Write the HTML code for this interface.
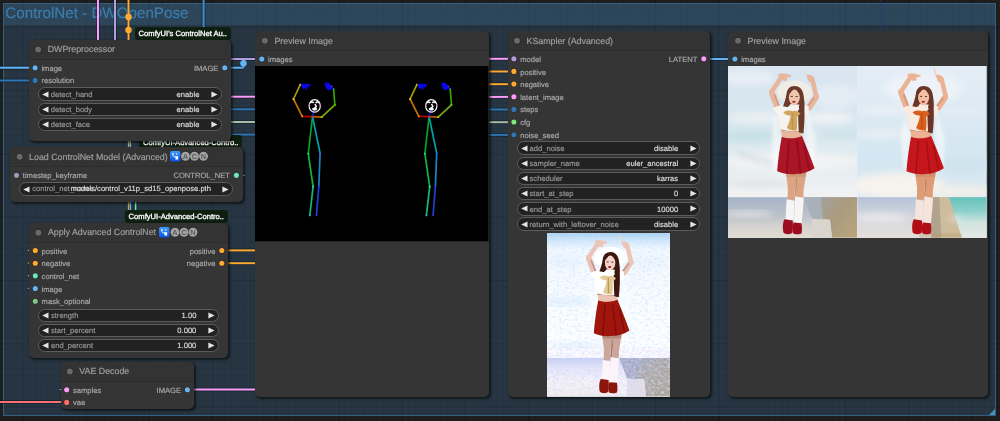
<!DOCTYPE html>
<html lang="en"><head><meta charset="utf-8"><title>ControlNet - DWOpenPose</title>
<style>
html,body{margin:0;padding:0;}
body{width:1000px;height:421px;overflow:hidden;position:relative;background:#1f1f1f;font-family:"Liberation Sans", sans-serif;}
#root{position:absolute;left:0;top:0;width:1000px;height:421px;overflow:hidden;will-change:transform;}
#bg{position:absolute;left:0;top:0;width:1000px;height:421px;
 background-image:
  linear-gradient(to right, rgba(0,0,0,0.22) 1px, transparent 1px),
  linear-gradient(to bottom, rgba(0,0,0,0.22) 1px, transparent 1px),
  linear-gradient(to right, rgba(0,0,0,0.12) 1px, transparent 1px),
  linear-gradient(to bottom, rgba(0,0,0,0.12) 1px, transparent 1px);
 background-size:63.3px 63.3px,63.3px 63.3px,6.33px 6.33px,6.33px 6.33px;
 background-position:22.2px 26.9px,22.2px 26.9px,22.2px 26.9px,22.2px 26.9px;}
#group{position:absolute;left:2.8px;top:2.8px;width:993.2px;height:413.4px;box-sizing:border-box;border:1px solid rgba(63,125,170,0.62);background:rgba(60,118,165,0.26);}
#gtitle{position:absolute;left:0;top:0;right:0;height:21.3px;background:rgba(63,120,158,0.25);}
#gcorner{position:absolute;right:0;bottom:0;width:0;height:0;border-left:6.3px solid transparent;border-bottom:6.3px solid #4a8fc0;}
.t{position:absolute;white-space:nowrap;margin:0;padding:0;text-rendering:geometricPrecision;-webkit-text-stroke:0.16px currentColor;}
.d{position:absolute;border-radius:50%;}
.node{position:absolute;background:#353535;border-radius:5px;box-shadow:1.3px 1.3px 2.2px rgba(0,0,0,0.55);overflow:hidden;}
.nt{position:absolute;left:0;top:0;right:0;background:#333333;border-bottom:1px solid rgba(0,0,0,0.13);box-sizing:border-box;}
.pill{position:absolute;box-sizing:border-box;border:1.2px solid #5c5c5c;border-radius:7px;background:#222222;}
.ar{position:absolute;overflow:visible;}
.badge{position:absolute;background:#0f1f0f;border-radius:3.2px;}
svg.layer{position:absolute;left:0;top:0;}
.img{position:absolute;overflow:hidden;}
</style></head><body>
<div id="root">
<div id="bg"></div>
<div id="group"><div id="gtitle"></div><div id="gcorner"></div></div>

<div class="t" style="left:5.3px;top:4px;font-size:15.19px;line-height:20px;color:#3c7dad;">ControlNet - DWOpenPose</div>
<svg class="layer" width="1000" height="421" viewBox="0 0 1000 421"><path d="M98 0L98 41" stroke="rgba(6,20,40,0.4)" stroke-width="3.8" fill="none"/><path d="M98 0L98 41" stroke="#ff9cf9" stroke-width="2" fill="none"/><path d="M115 0L115 41" stroke="rgba(6,20,40,0.4)" stroke-width="3.8" fill="none"/><path d="M115 0L115 41" stroke="#b39ddb" stroke-width="2" fill="none"/><path d="M128.5 0L128.5 41" stroke="rgba(6,20,40,0.4)" stroke-width="3.8" fill="none"/><path d="M128.5 0L128.5 41" stroke="#ffa931" stroke-width="2" fill="none"/><circle cx="128.5" cy="17" r="3.2" fill="#ffa931"/><circle cx="128.5" cy="30" r="3.2" fill="#ffa931"/><path d="M203.6 0L203.6 28" stroke="rgba(6,20,40,0.4)" stroke-width="3.8" fill="none"/><path d="M203.6 0L203.6 28" stroke="#3a8fd0" stroke-width="2" fill="none"/><path d="M880.6 0L880.6 32" stroke="#2a3a88" stroke-width="1" opacity="0.45" fill="none"/><path d="M0 67.7L31 67.7" stroke="rgba(6,20,40,0.4)" stroke-width="3.8" fill="none"/><path d="M0 67.7L31 67.7" stroke="#64b5f6" stroke-width="2" fill="none"/><path d="M0 80.5L31 80.5" stroke="rgba(6,20,40,0.4)" stroke-width="3.8" fill="none"/><path d="M0 80.5L31 80.5" stroke="#3074b2" stroke-width="2" fill="none"/><path d="M0 402L62 402" stroke="rgba(6,20,40,0.4)" stroke-width="3.8" fill="none"/><path d="M0 402L62 402" stroke="#ff6e6e" stroke-width="2" fill="none"/><path d="M59.6 389.6L62 389.6" stroke="rgba(6,20,40,0.4)" stroke-width="2.8" fill="none"/><path d="M59.6 389.6L62 389.6" stroke="#ff9cf9" stroke-width="1" fill="none"/><path d="M230 59L256 59" stroke="rgba(6,20,40,0.4)" stroke-width="3.8" fill="none"/><path d="M230 59L256 59" stroke="#b39ddb" stroke-width="2" fill="none"/><path d="M228 67.7L243.5 67.7" stroke="rgba(6,20,40,0.4)" stroke-width="3.8" fill="none"/><path d="M228 67.7L243.5 67.7" stroke="#64b5f6" stroke-width="2" fill="none"/><path d="M243.5 67.7L243.5 60" stroke="rgba(6,20,40,0.4)" stroke-width="3.8" fill="none"/><path d="M243.5 67.7L243.5 60" stroke="#64b5f6" stroke-width="2" fill="none"/><circle cx="243.5" cy="63.3" r="3.2" fill="#64b5f6"/><path d="M230 96.7L256 96.7" stroke="rgba(6,20,40,0.4)" stroke-width="3.8" fill="none"/><path d="M230 96.7L256 96.7" stroke="#ff9cf9" stroke-width="2" fill="none"/><path d="M230 109.3L256 109.3" stroke="rgba(6,20,40,0.4)" stroke-width="3.8" fill="none"/><path d="M230 109.3L256 109.3" stroke="#3074b2" stroke-width="2" fill="none"/><path d="M230 122L256 122" stroke="rgba(6,20,40,0.4)" stroke-width="3.8" fill="none"/><path d="M230 122L256 122" stroke="#a9bca4" stroke-width="2" fill="none"/><path d="M230 134.6L256 134.6" stroke="rgba(6,20,40,0.4)" stroke-width="3.8" fill="none"/><path d="M230 134.6L256 134.6" stroke="#3074b2" stroke-width="2" fill="none"/><path d="M128.6 139L128.6 149" stroke="rgba(6,20,40,0.4)" stroke-width="3.4" fill="none"/><path d="M128.6 139L128.6 149" stroke="#ffa931" stroke-width="1.6" fill="none"/><path d="M130.4 139L130.4 149" stroke="rgba(6,20,40,0.4)" stroke-width="3.4" fill="none"/><path d="M130.4 139L130.4 149" stroke="#64b5f6" stroke-width="1.6" fill="none"/><path d="M128.6 201L128.6 212" stroke="rgba(6,20,40,0.4)" stroke-width="3.4" fill="none"/><path d="M128.6 201L128.6 212" stroke="#ffa931" stroke-width="1.6" fill="none"/><path d="M130.4 201L130.4 212" stroke="rgba(6,20,40,0.4)" stroke-width="3.4" fill="none"/><path d="M130.4 201L130.4 212" stroke="#64b5f6" stroke-width="1.6" fill="none"/><path d="M135.6 201L135.6 212" stroke="rgba(6,20,40,0.4)" stroke-width="3.4" fill="none"/><path d="M135.6 201L135.6 212" stroke="#6ee7b7" stroke-width="1.6" fill="none"/><path d="M226 250.4L256 250.4" stroke="rgba(6,20,40,0.4)" stroke-width="3.8" fill="none"/><path d="M226 250.4L256 250.4" stroke="#ffa931" stroke-width="2" fill="none"/><path d="M226 263.2L256 263.2" stroke="rgba(6,20,40,0.4)" stroke-width="3.8" fill="none"/><path d="M226 263.2L256 263.2" stroke="#ffa931" stroke-width="2" fill="none"/><path d="M27.8 250.4L30 250.4" stroke="rgba(6,20,40,0.4)" stroke-width="3" fill="none"/><path d="M27.8 250.4L30 250.4" stroke="#ffa931" stroke-width="1.2" fill="none"/><path d="M27.8 263.1L30 263.1" stroke="rgba(6,20,40,0.4)" stroke-width="3" fill="none"/><path d="M27.8 263.1L30 263.1" stroke="#ffa931" stroke-width="1.2" fill="none"/><path d="M27.8 275.7L30 275.7" stroke="rgba(6,20,40,0.4)" stroke-width="3" fill="none"/><path d="M27.8 275.7L30 275.7" stroke="#6ee7b7" stroke-width="1.2" fill="none"/><path d="M27.8 288.4L30 288.4" stroke="rgba(6,20,40,0.4)" stroke-width="3" fill="none"/><path d="M27.8 288.4L30 288.4" stroke="#64b5f6" stroke-width="1.2" fill="none"/><path d="M237 175.3L245 175.3" stroke="rgba(6,20,40,0.4)" stroke-width="3" fill="none"/><path d="M237 175.3L245 175.3" stroke="#6ee7b7" stroke-width="1.2" fill="none"/><path d="M192 389.6L256 389.6" stroke="rgba(6,20,40,0.4)" stroke-width="3.8" fill="none"/><path d="M192 389.6L256 389.6" stroke="#ff9cf9" stroke-width="2" fill="none"/><path d="M489 58.8L509 58.8" stroke="rgba(6,20,40,0.4)" stroke-width="3.8" fill="none"/><path d="M489 58.8L509 58.8" stroke="#ff9cf9" stroke-width="2" fill="none"/><path d="M489 71.5L509 71.5" stroke="rgba(6,20,40,0.4)" stroke-width="3.8" fill="none"/><path d="M489 71.5L509 71.5" stroke="#ffa931" stroke-width="2" fill="none"/><path d="M489 84.2L509 84.2" stroke="rgba(6,20,40,0.4)" stroke-width="3.8" fill="none"/><path d="M489 84.2L509 84.2" stroke="#ffa931" stroke-width="2" fill="none"/><path d="M489 96.9L509 96.9" stroke="rgba(6,20,40,0.4)" stroke-width="3.8" fill="none"/><path d="M489 96.9L509 96.9" stroke="#ff9cf9" stroke-width="2" fill="none"/><path d="M489 109.5L509 109.5" stroke="rgba(6,20,40,0.4)" stroke-width="3.8" fill="none"/><path d="M489 109.5L509 109.5" stroke="#3074b2" stroke-width="2" fill="none"/><path d="M489 122.2L509 122.2" stroke="rgba(6,20,40,0.4)" stroke-width="3.8" fill="none"/><path d="M489 122.2L509 122.2" stroke="#a9bca4" stroke-width="2" fill="none"/><path d="M489 134.9L509 134.9" stroke="rgba(6,20,40,0.4)" stroke-width="3.8" fill="none"/><path d="M489 134.9L509 134.9" stroke="#3074b2" stroke-width="2" fill="none"/><path d="M709 59L729 59" stroke="rgba(6,20,40,0.4)" stroke-width="3.8" fill="none"/><path d="M709 59L729 59" stroke="#64b5f6" stroke-width="2" fill="none"/></svg>

<div class="badge" style="left:139.4px;top:135.2px;width:103px;height:12.6px"></div>
<div class="t" style="left:143px;top:138px;font-size:7.6px;line-height:10px;color:#ffffff;-webkit-text-stroke:0.3px #fff">ComfyUI-Advanced-Contro..</div>
<div class="node" style="left:10.4px;top:147.3px;width:232.2px;height:55.1px"><div class="nt" style="height:19.59px"></div></div>
<svg class="ar" style="left:15px;top:152px" width="9" height="9"><circle cx="4.6" cy="4.7" r="3.55" fill="rgba(0,0,0,0.28)"/><circle cx="4.6" cy="4.7" r="3" fill="#6a6a6a"/></svg>
<svg class="ar" style="left:169.9px;top:150.9px" width="10.4" height="10.6" viewBox="0 0 10.4 10.6"><defs><linearGradient id="pg1699" x1="0" y1="0" x2="0" y2="1"><stop offset="0" stop-color="#3b9dff"/><stop offset="1" stop-color="#0a4fe6"/></linearGradient></defs><rect x="0" y="0" width="10.4" height="10.6" rx="1.8" fill="url(#pg1699)"/><circle cx="3" cy="2.9" r="0.9" fill="#fff"/><path d="M2.6 4.2L4.6 6.2L6.2 5.4" stroke="#fff" stroke-width="1" fill="none"/><circle cx="6.6" cy="3" r="0.8" fill="#e8f0ff"/><path d="M5.6 5.6L8 5L8.2 8.4L5.4 8.6Z" fill="#fff"/></svg>
<svg class="ar" style="left:180px;top:150px" width="12" height="12"><circle cx="5.5" cy="6.2" r="5.05" fill="rgba(0,0,0,0.28)"/><circle cx="5.5" cy="6.2" r="4.5" fill="#a3a3a3"/></svg>
<div class="t" style="left:181px;top:151.6px;width:9px;text-align:center;font-size:7.4px;line-height:9px;font-weight:bold;color:#5e5e5e;-webkit-text-stroke:0">A</div>
<svg class="ar" style="left:189px;top:150px" width="12" height="12"><circle cx="5.5" cy="6.2" r="5.05" fill="rgba(0,0,0,0.28)"/><circle cx="5.5" cy="6.2" r="4.5" fill="#a3a3a3"/></svg>
<div class="t" style="left:190px;top:151.6px;width:9px;text-align:center;font-size:7.4px;line-height:9px;font-weight:bold;color:#5e5e5e;-webkit-text-stroke:0">C</div>
<svg class="ar" style="left:198px;top:150px" width="12" height="12"><circle cx="5.5" cy="6.2" r="5.05" fill="rgba(0,0,0,0.28)"/><circle cx="5.5" cy="6.2" r="4.5" fill="#a3a3a3"/></svg>
<div class="t" style="left:199px;top:151.6px;width:9px;text-align:center;font-size:7.4px;line-height:9px;font-weight:bold;color:#5e5e5e;-webkit-text-stroke:0">N</div>
<div class="t" style="left:29.09px;top:151px;font-size:8.86px;line-height:12px;color:#a0a0a0;">Load ControlNet Model (Advanced)</div>
<svg class="ar" style="left:12px;top:171px" width="9" height="9"><circle cx="4.5" cy="4.35" r="3.1" fill="rgba(0,0,0,0.28)"/><circle cx="4.5" cy="4.35" r="2.55" fill="#9c98b8"/></svg>
<div class="t" style="left:22.8px;top:171px;font-size:7.6px;line-height:10px;color:#aaaaaa;">timestep_keyframe</div>
<svg class="ar" style="left:232px;top:171px" width="9" height="9"><circle cx="4.4" cy="4.35" r="3.1" fill="rgba(0,0,0,0.28)"/><circle cx="4.4" cy="4.35" r="2.55" fill="#6ee7b7"/></svg>
<div class="t" style="right:770px;text-align:right;top:171px;font-size:7.6px;line-height:10px;color:#aaaaaa;">CONTROL_NET</div>
<div class="pill" style="left:19.4px;top:182.35px;width:213.8px;height:13.36px"></div>
<svg class="ar" style="left:23.3px;top:185.53px" width="7" height="7" viewBox="0 0 7 7"><path d="M6.5 0.4L0.2 3.5L6.5 6.6Z" fill="#e4e4e4"/></svg>
<svg class="ar" style="left:222.4px;top:185.53px" width="7" height="7" viewBox="0 0 7 7"><path d="M0.4 0.4L6.6 3.5L0.4 6.6Z" fill="#e4e4e4"/></svg>
<div class="t" style="left:32.16px;top:184px;font-size:7.6px;line-height:10px;color:#999999;">control_net_name</div>
<div class="t" style="right:789.05px;text-align:right;top:184px;font-size:7.6px;line-height:10px;color:#dddddd;">models/control_v11p_sd15_openpose.pth</div>
<div class="badge" style="left:135px;top:27.2px;width:96px;height:12.6px"></div>
<div class="t" style="left:138.6px;top:29px;font-size:7.6px;line-height:10px;color:#ffffff;-webkit-text-stroke:0.3px #fff">ComfyUI's ControlNet Au..</div>
<div class="node" style="left:29px;top:40px;width:202px;height:100.6px"><div class="nt" style="height:19.59px"></div></div>
<svg class="ar" style="left:34px;top:45px" width="9" height="9"><circle cx="4.2" cy="4.4" r="3.55" fill="rgba(0,0,0,0.28)"/><circle cx="4.2" cy="4.4" r="3" fill="#6a6a6a"/></svg>
<div class="t" style="left:47.69px;top:43px;font-size:8.86px;line-height:12px;color:#a0a0a0;">DWPreprocessor</div>
<svg class="ar" style="left:31px;top:64px" width="9" height="9"><circle cx="4.1" cy="3.75" r="3.1" fill="rgba(0,0,0,0.28)"/><circle cx="4.1" cy="3.75" r="2.55" fill="#64b5f6"/></svg>
<div class="t" style="left:41.4px;top:64px;font-size:7.6px;line-height:10px;color:#aaaaaa;">image</div>
<svg class="ar" style="left:31px;top:76px" width="9" height="9"><circle cx="4.1" cy="4.41" r="3.1" fill="rgba(0,0,0,0.28)"/><circle cx="4.1" cy="4.41" r="2.55" fill="#3074b2"/></svg>
<div class="t" style="left:41.4px;top:76px;font-size:7.6px;line-height:10px;color:#aaaaaa;">resolution</div>
<svg class="ar" style="left:221px;top:64px" width="9" height="9"><circle cx="3.8" cy="3.75" r="3.1" fill="rgba(0,0,0,0.28)"/><circle cx="3.8" cy="3.75" r="2.55" fill="#64b5f6"/></svg>
<div class="t" style="right:781.6px;text-align:right;top:64px;font-size:7.6px;line-height:10px;color:#aaaaaa;">IMAGE</div>
<div class="pill" style="left:38px;top:87.36px;width:183.6px;height:13.36px"></div>
<svg class="ar" style="left:41.9px;top:90.54px" width="7" height="7" viewBox="0 0 7 7"><path d="M6.5 0.4L0.2 3.5L6.5 6.6Z" fill="#e4e4e4"/></svg>
<svg class="ar" style="left:210.8px;top:90.54px" width="7" height="7" viewBox="0 0 7 7"><path d="M0.4 0.4L6.6 3.5L0.4 6.6Z" fill="#e4e4e4"/></svg>
<div class="t" style="left:50.76px;top:90px;font-size:7.6px;line-height:10px;color:#999999;">detect_hand</div>
<div class="t" style="right:800.65px;text-align:right;top:90px;font-size:7.6px;line-height:10px;color:#dddddd;">enable</div>
<div class="pill" style="left:38px;top:102.55px;width:183.6px;height:13.36px"></div>
<svg class="ar" style="left:41.9px;top:105.73px" width="7" height="7" viewBox="0 0 7 7"><path d="M6.5 0.4L0.2 3.5L6.5 6.6Z" fill="#e4e4e4"/></svg>
<svg class="ar" style="left:210.8px;top:105.73px" width="7" height="7" viewBox="0 0 7 7"><path d="M0.4 0.4L6.6 3.5L0.4 6.6Z" fill="#e4e4e4"/></svg>
<div class="t" style="left:50.76px;top:105px;font-size:7.6px;line-height:10px;color:#999999;">detect_body</div>
<div class="t" style="right:800.65px;text-align:right;top:105px;font-size:7.6px;line-height:10px;color:#dddddd;">enable</div>
<div class="pill" style="left:38px;top:117.74px;width:183.6px;height:13.36px"></div>
<svg class="ar" style="left:41.9px;top:120.92px" width="7" height="7" viewBox="0 0 7 7"><path d="M6.5 0.4L0.2 3.5L6.5 6.6Z" fill="#e4e4e4"/></svg>
<svg class="ar" style="left:210.8px;top:120.92px" width="7" height="7" viewBox="0 0 7 7"><path d="M0.4 0.4L6.6 3.5L0.4 6.6Z" fill="#e4e4e4"/></svg>
<div class="t" style="left:50.76px;top:120px;font-size:7.6px;line-height:10px;color:#999999;">detect_face</div>
<div class="t" style="right:800.65px;text-align:right;top:120px;font-size:7.6px;line-height:10px;color:#dddddd;">enable</div>
<div class="badge" style="left:125px;top:210px;width:102.6px;height:12.6px"></div>
<div class="t" style="left:128.6px;top:212px;font-size:7.6px;line-height:10px;color:#ffffff;-webkit-text-stroke:0.3px #fff">ComfyUI-Advanced-Contro..</div>
<div class="node" style="left:29.2px;top:223.3px;width:198.8px;height:135.1px"><div class="nt" style="height:19.59px"></div></div>
<svg class="ar" style="left:34px;top:228px" width="9" height="9"><circle cx="4.4" cy="4.7" r="3.55" fill="rgba(0,0,0,0.28)"/><circle cx="4.4" cy="4.7" r="3" fill="#6a6a6a"/></svg>
<svg class="ar" style="left:159.4px;top:226.9px" width="10.4" height="10.6" viewBox="0 0 10.4 10.6"><defs><linearGradient id="pg1593" x1="0" y1="0" x2="0" y2="1"><stop offset="0" stop-color="#3b9dff"/><stop offset="1" stop-color="#0a4fe6"/></linearGradient></defs><rect x="0" y="0" width="10.4" height="10.6" rx="1.8" fill="url(#pg1593)"/><circle cx="3" cy="2.9" r="0.9" fill="#fff"/><path d="M2.6 4.2L4.6 6.2L6.2 5.4" stroke="#fff" stroke-width="1" fill="none"/><circle cx="6.6" cy="3" r="0.8" fill="#e8f0ff"/><path d="M5.6 5.6L8 5L8.2 8.4L5.4 8.6Z" fill="#fff"/></svg>
<svg class="ar" style="left:169px;top:226px" width="12" height="12"><circle cx="6" cy="6.2" r="5.05" fill="rgba(0,0,0,0.28)"/><circle cx="6" cy="6.2" r="4.5" fill="#a3a3a3"/></svg>
<div class="t" style="left:170.5px;top:227.6px;width:9px;text-align:center;font-size:7.4px;line-height:9px;font-weight:bold;color:#5e5e5e;-webkit-text-stroke:0">A</div>
<svg class="ar" style="left:178px;top:226px" width="12" height="12"><circle cx="6" cy="6.2" r="5.05" fill="rgba(0,0,0,0.28)"/><circle cx="6" cy="6.2" r="4.5" fill="#a3a3a3"/></svg>
<div class="t" style="left:179.5px;top:227.6px;width:9px;text-align:center;font-size:7.4px;line-height:9px;font-weight:bold;color:#5e5e5e;-webkit-text-stroke:0">C</div>
<svg class="ar" style="left:187px;top:226px" width="12" height="12"><circle cx="6" cy="6.2" r="5.05" fill="rgba(0,0,0,0.28)"/><circle cx="6" cy="6.2" r="4.5" fill="#a3a3a3"/></svg>
<div class="t" style="left:188.5px;top:227.6px;width:9px;text-align:center;font-size:7.4px;line-height:9px;font-weight:bold;color:#5e5e5e;-webkit-text-stroke:0">N</div>
<div class="t" style="left:47.89px;top:226px;font-size:8.86px;line-height:12px;color:#a0a0a0;">Apply Advanced ControlNet</div>
<svg class="ar" style="left:31px;top:247px" width="9" height="9"><circle cx="4.3" cy="3.55" r="3.1" fill="rgba(0,0,0,0.28)"/><circle cx="4.3" cy="3.55" r="2.55" fill="#ffa931"/></svg>
<div class="t" style="left:41.6px;top:247px;font-size:7.6px;line-height:10px;color:#aaaaaa;">positive</div>
<svg class="ar" style="left:31px;top:259px" width="9" height="9"><circle cx="4.3" cy="4.21" r="3.1" fill="rgba(0,0,0,0.28)"/><circle cx="4.3" cy="4.21" r="2.55" fill="#ffa931"/></svg>
<div class="t" style="left:41.6px;top:259px;font-size:7.6px;line-height:10px;color:#aaaaaa;">negative</div>
<svg class="ar" style="left:31px;top:272px" width="9" height="9"><circle cx="4.3" cy="3.87" r="3.1" fill="rgba(0,0,0,0.28)"/><circle cx="4.3" cy="3.87" r="2.55" fill="#6ee7b7"/></svg>
<div class="t" style="left:41.6px;top:272px;font-size:7.6px;line-height:10px;color:#aaaaaa;">control_net</div>
<svg class="ar" style="left:31px;top:284px" width="9" height="9"><circle cx="4.3" cy="4.53" r="3.1" fill="rgba(0,0,0,0.28)"/><circle cx="4.3" cy="4.53" r="2.55" fill="#64b5f6"/></svg>
<div class="t" style="left:41.6px;top:285px;font-size:7.6px;line-height:10px;color:#aaaaaa;">image</div>
<svg class="ar" style="left:31px;top:297px" width="9" height="9"><circle cx="4.3" cy="4.19" r="3.1" fill="rgba(0,0,0,0.28)"/><circle cx="4.3" cy="4.19" r="2.55" fill="#81c784"/></svg>
<div class="t" style="left:41.6px;top:297px;font-size:7.6px;line-height:10px;color:#aaaaaa;">mask_optional</div>
<svg class="ar" style="left:218px;top:247px" width="9" height="9"><circle cx="3.8" cy="3.55" r="3.1" fill="rgba(0,0,0,0.28)"/><circle cx="3.8" cy="3.55" r="2.55" fill="#ffa931"/></svg>
<div class="t" style="right:784.6px;text-align:right;top:247px;font-size:7.6px;line-height:10px;color:#aaaaaa;">positive</div>
<svg class="ar" style="left:218px;top:259px" width="9" height="9"><circle cx="3.8" cy="4.21" r="3.1" fill="rgba(0,0,0,0.28)"/><circle cx="3.8" cy="4.21" r="2.55" fill="#ffa931"/></svg>
<div class="t" style="right:784.6px;text-align:right;top:259px;font-size:7.6px;line-height:10px;color:#aaaaaa;">negative</div>
<div class="pill" style="left:38.2px;top:308.64px;width:180.4px;height:13.36px"></div>
<svg class="ar" style="left:42.1px;top:311.82px" width="7" height="7" viewBox="0 0 7 7"><path d="M6.5 0.4L0.2 3.5L6.5 6.6Z" fill="#e4e4e4"/></svg>
<svg class="ar" style="left:207.8px;top:311.82px" width="7" height="7" viewBox="0 0 7 7"><path d="M0.4 0.4L6.6 3.5L0.4 6.6Z" fill="#e4e4e4"/></svg>
<div class="t" style="left:50.96px;top:311px;font-size:7.6px;line-height:10px;color:#999999;">strength</div>
<div class="t" style="right:803.65px;text-align:right;top:311px;font-size:7.6px;line-height:10px;color:#dddddd;">1.00</div>
<div class="pill" style="left:38.2px;top:323.83px;width:180.4px;height:13.36px"></div>
<svg class="ar" style="left:42.1px;top:327.01px" width="7" height="7" viewBox="0 0 7 7"><path d="M6.5 0.4L0.2 3.5L6.5 6.6Z" fill="#e4e4e4"/></svg>
<svg class="ar" style="left:207.8px;top:327.01px" width="7" height="7" viewBox="0 0 7 7"><path d="M0.4 0.4L6.6 3.5L0.4 6.6Z" fill="#e4e4e4"/></svg>
<div class="t" style="left:50.96px;top:326px;font-size:7.6px;line-height:10px;color:#999999;">start_percent</div>
<div class="t" style="right:803.65px;text-align:right;top:326px;font-size:7.6px;line-height:10px;color:#dddddd;">0.000</div>
<div class="pill" style="left:38.2px;top:339.02px;width:180.4px;height:13.36px"></div>
<svg class="ar" style="left:42.1px;top:342.2px" width="7" height="7" viewBox="0 0 7 7"><path d="M6.5 0.4L0.2 3.5L6.5 6.6Z" fill="#e4e4e4"/></svg>
<svg class="ar" style="left:207.8px;top:342.2px" width="7" height="7" viewBox="0 0 7 7"><path d="M0.4 0.4L6.6 3.5L0.4 6.6Z" fill="#e4e4e4"/></svg>
<div class="t" style="left:50.96px;top:341px;font-size:7.6px;line-height:10px;color:#999999;">end_percent</div>
<div class="t" style="right:803.65px;text-align:right;top:341px;font-size:7.6px;line-height:10px;color:#dddddd;">1.000</div>
<div class="node" style="left:60.6px;top:362px;width:133px;height:47px"><div class="nt" style="height:19.59px"></div></div>
<svg class="ar" style="left:65px;top:367px" width="9" height="9"><circle cx="4.8" cy="4.39" r="3.55" fill="rgba(0,0,0,0.28)"/><circle cx="4.8" cy="4.39" r="3" fill="#6a6a6a"/></svg>
<div class="t" style="left:79.29px;top:365px;font-size:8.86px;line-height:12px;color:#a0a0a0;">VAE Decode</div>
<svg class="ar" style="left:63px;top:386px" width="9" height="9"><circle cx="3.7" cy="3.75" r="3.1" fill="rgba(0,0,0,0.28)"/><circle cx="3.7" cy="3.75" r="2.55" fill="#ff9cf9"/></svg>
<div class="t" style="left:73px;top:386px;font-size:7.6px;line-height:10px;color:#aaaaaa;">samples</div>
<svg class="ar" style="left:63px;top:398px" width="9" height="9"><circle cx="3.7" cy="4.41" r="3.1" fill="rgba(0,0,0,0.28)"/><circle cx="3.7" cy="4.41" r="2.55" fill="#ff6e6e"/></svg>
<div class="t" style="left:73px;top:398px;font-size:7.6px;line-height:10px;color:#aaaaaa;">vae</div>
<svg class="ar" style="left:183px;top:386px" width="9" height="9"><circle cx="4.4" cy="3.75" r="3.1" fill="rgba(0,0,0,0.28)"/><circle cx="4.4" cy="3.75" r="2.55" fill="#64b5f6"/></svg>
<div class="t" style="right:819px;text-align:right;top:386px;font-size:7.6px;line-height:10px;color:#aaaaaa;">IMAGE</div>
<div class="node" style="left:255.2px;top:31.25px;width:234.3px;height:365.8px"><div class="nt" style="height:19.59px"></div></div>
<svg class="ar" style="left:260px;top:36px" width="9" height="9"><circle cx="4.9" cy="4.65" r="3.55" fill="rgba(0,0,0,0.28)"/><circle cx="4.9" cy="4.65" r="3" fill="#6a6a6a"/></svg>
<div class="t" style="left:274.39px;top:35px;font-size:8.86px;line-height:12px;color:#a0a0a0;">Preview Image</div>
<svg class="ar" style="left:258px;top:55px" width="9" height="9"><circle cx="3.8" cy="4" r="3.1" fill="rgba(0,0,0,0.28)"/><circle cx="3.8" cy="4" r="2.55" fill="#64b5f6"/></svg>
<div class="t" style="left:268.1px;top:55px;font-size:7.6px;line-height:10px;color:#aaaaaa;">images</div>
<div class="node" style="left:508px;top:31.25px;width:202px;height:365.8px"><div class="nt" style="height:19.59px"></div></div>
<svg class="ar" style="left:513px;top:36px" width="9" height="9"><circle cx="4" cy="4.65" r="3.55" fill="rgba(0,0,0,0.28)"/><circle cx="4" cy="4.65" r="3" fill="#6a6a6a"/></svg>
<div class="t" style="left:526.49px;top:35px;font-size:8.86px;line-height:12px;color:#a0a0a0;">KSampler (Advanced)</div>
<svg class="ar" style="left:510px;top:55px" width="9" height="9"><circle cx="3.9" cy="3.75" r="3.1" fill="rgba(0,0,0,0.28)"/><circle cx="3.9" cy="3.75" r="2.55" fill="#b39ddb"/></svg>
<div class="t" style="left:520.2px;top:55px;font-size:7.6px;line-height:10px;color:#aaaaaa;">model</div>
<svg class="ar" style="left:510px;top:67px" width="9" height="9"><circle cx="3.9" cy="4.41" r="3.1" fill="rgba(0,0,0,0.28)"/><circle cx="3.9" cy="4.41" r="2.55" fill="#ffa931"/></svg>
<div class="t" style="left:520.2px;top:68px;font-size:7.6px;line-height:10px;color:#aaaaaa;">positive</div>
<svg class="ar" style="left:510px;top:80px" width="9" height="9"><circle cx="3.9" cy="4.07" r="3.1" fill="rgba(0,0,0,0.28)"/><circle cx="3.9" cy="4.07" r="2.55" fill="#ffa931"/></svg>
<div class="t" style="left:520.2px;top:80px;font-size:7.6px;line-height:10px;color:#aaaaaa;">negative</div>
<svg class="ar" style="left:510px;top:93px" width="9" height="9"><circle cx="3.9" cy="3.73" r="3.1" fill="rgba(0,0,0,0.28)"/><circle cx="3.9" cy="3.73" r="2.55" fill="#ff9cf9"/></svg>
<div class="t" style="left:520.2px;top:93px;font-size:7.6px;line-height:10px;color:#aaaaaa;">latent_image</div>
<svg class="ar" style="left:510px;top:105px" width="9" height="9"><circle cx="3.9" cy="4.39" r="3.1" fill="rgba(0,0,0,0.28)"/><circle cx="3.9" cy="4.39" r="2.55" fill="#3074b2"/></svg>
<div class="t" style="left:520.2px;top:105px;font-size:7.6px;line-height:10px;color:#aaaaaa;">steps</div>
<svg class="ar" style="left:510px;top:118px" width="9" height="9"><circle cx="3.9" cy="4.05" r="3.1" fill="rgba(0,0,0,0.28)"/><circle cx="3.9" cy="4.05" r="2.55" fill="#7ee87e"/></svg>
<div class="t" style="left:520.2px;top:118px;font-size:7.6px;line-height:10px;color:#aaaaaa;">cfg</div>
<svg class="ar" style="left:510px;top:131px" width="9" height="9"><circle cx="3.9" cy="3.71" r="3.1" fill="rgba(0,0,0,0.28)"/><circle cx="3.9" cy="3.71" r="2.55" fill="#3074b2"/></svg>
<div class="t" style="left:520.2px;top:131px;font-size:7.6px;line-height:10px;color:#aaaaaa;">noise_seed</div>
<svg class="ar" style="left:700px;top:55px" width="9" height="9"><circle cx="3.8" cy="3.75" r="3.1" fill="rgba(0,0,0,0.28)"/><circle cx="3.8" cy="3.75" r="2.55" fill="#ff9cf9"/></svg>
<div class="t" style="right:302.6px;text-align:right;top:55px;font-size:7.6px;line-height:10px;color:#aaaaaa;">LATENT</div>
<div class="pill" style="left:516.8px;top:141.45px;width:183.6px;height:13.36px"></div>
<svg class="ar" style="left:520.7px;top:144.63px" width="7" height="7" viewBox="0 0 7 7"><path d="M6.5 0.4L0.2 3.5L6.5 6.6Z" fill="#e4e4e4"/></svg>
<svg class="ar" style="left:689.6px;top:144.63px" width="7" height="7" viewBox="0 0 7 7"><path d="M0.4 0.4L6.6 3.5L0.4 6.6Z" fill="#e4e4e4"/></svg>
<div class="t" style="left:529.56px;top:144px;font-size:7.6px;line-height:10px;color:#999999;">add_noise</div>
<div class="t" style="right:321.85px;text-align:right;top:144px;font-size:7.6px;line-height:10px;color:#dddddd;">disable</div>
<div class="pill" style="left:516.8px;top:156.64px;width:183.6px;height:13.36px"></div>
<svg class="ar" style="left:520.7px;top:159.82px" width="7" height="7" viewBox="0 0 7 7"><path d="M6.5 0.4L0.2 3.5L6.5 6.6Z" fill="#e4e4e4"/></svg>
<svg class="ar" style="left:689.6px;top:159.82px" width="7" height="7" viewBox="0 0 7 7"><path d="M0.4 0.4L6.6 3.5L0.4 6.6Z" fill="#e4e4e4"/></svg>
<div class="t" style="left:529.56px;top:159px;font-size:7.6px;line-height:10px;color:#999999;">sampler_name</div>
<div class="t" style="right:321.85px;text-align:right;top:159px;font-size:7.6px;line-height:10px;color:#dddddd;">euler_ancestral</div>
<div class="pill" style="left:516.8px;top:171.83px;width:183.6px;height:13.36px"></div>
<svg class="ar" style="left:520.7px;top:175.01px" width="7" height="7" viewBox="0 0 7 7"><path d="M6.5 0.4L0.2 3.5L6.5 6.6Z" fill="#e4e4e4"/></svg>
<svg class="ar" style="left:689.6px;top:175.01px" width="7" height="7" viewBox="0 0 7 7"><path d="M0.4 0.4L6.6 3.5L0.4 6.6Z" fill="#e4e4e4"/></svg>
<div class="t" style="left:529.56px;top:174px;font-size:7.6px;line-height:10px;color:#999999;">scheduler</div>
<div class="t" style="right:321.85px;text-align:right;top:174px;font-size:7.6px;line-height:10px;color:#dddddd;">karras</div>
<div class="pill" style="left:516.8px;top:187.03px;width:183.6px;height:13.36px"></div>
<svg class="ar" style="left:520.7px;top:190.21px" width="7" height="7" viewBox="0 0 7 7"><path d="M6.5 0.4L0.2 3.5L6.5 6.6Z" fill="#e4e4e4"/></svg>
<svg class="ar" style="left:689.6px;top:190.21px" width="7" height="7" viewBox="0 0 7 7"><path d="M0.4 0.4L6.6 3.5L0.4 6.6Z" fill="#e4e4e4"/></svg>
<div class="t" style="left:529.56px;top:189px;font-size:7.6px;line-height:10px;color:#999999;">start_at_step</div>
<div class="t" style="right:321.85px;text-align:right;top:189px;font-size:7.6px;line-height:10px;color:#dddddd;">0</div>
<div class="pill" style="left:516.8px;top:202.22px;width:183.6px;height:13.36px"></div>
<svg class="ar" style="left:520.7px;top:205.4px" width="7" height="7" viewBox="0 0 7 7"><path d="M6.5 0.4L0.2 3.5L6.5 6.6Z" fill="#e4e4e4"/></svg>
<svg class="ar" style="left:689.6px;top:205.4px" width="7" height="7" viewBox="0 0 7 7"><path d="M0.4 0.4L6.6 3.5L0.4 6.6Z" fill="#e4e4e4"/></svg>
<div class="t" style="left:529.56px;top:205px;font-size:7.6px;line-height:10px;color:#999999;">end_at_step</div>
<div class="t" style="right:321.85px;text-align:right;top:205px;font-size:7.6px;line-height:10px;color:#dddddd;">10000</div>
<div class="pill" style="left:516.8px;top:217.41px;width:183.6px;height:13.36px"></div>
<svg class="ar" style="left:520.7px;top:220.59px" width="7" height="7" viewBox="0 0 7 7"><path d="M6.5 0.4L0.2 3.5L6.5 6.6Z" fill="#e4e4e4"/></svg>
<svg class="ar" style="left:689.6px;top:220.59px" width="7" height="7" viewBox="0 0 7 7"><path d="M0.4 0.4L6.6 3.5L0.4 6.6Z" fill="#e4e4e4"/></svg>
<div class="t" style="left:529.56px;top:220px;font-size:7.6px;line-height:10px;color:#999999;">return_with_leftover_noise</div>
<div class="t" style="right:321.85px;text-align:right;top:220px;font-size:7.6px;line-height:10px;color:#dddddd;">disable</div>
<div class="node" style="left:728.4px;top:31.25px;width:259.2px;height:365.8px"><div class="nt" style="height:19.59px"></div></div>
<svg class="ar" style="left:734px;top:36px" width="9" height="9"><circle cx="4" cy="4.65" r="3.55" fill="rgba(0,0,0,0.28)"/><circle cx="4" cy="4.65" r="3" fill="#6a6a6a"/></svg>
<div class="t" style="left:747.49px;top:35px;font-size:8.86px;line-height:12px;color:#a0a0a0;">Preview Image</div>
<svg class="ar" style="left:731px;top:55px" width="9" height="9"><circle cx="3.9" cy="4" r="3.1" fill="rgba(0,0,0,0.28)"/><circle cx="3.9" cy="4" r="2.55" fill="#64b5f6"/></svg>
<div class="t" style="left:741.2px;top:55px;font-size:7.6px;line-height:10px;color:#aaaaaa;">images</div>
<svg class="img" style="left:255.2px;top:66.3px" width="233.4" height="175.3" viewBox="255.2 66.3 233.4 175.3"><rect x="255.2" y="66.3" width="233.4" height="175.3" fill="#000"/><g fill="none"><path d="M312.7 116.9L302.4 116.6" stroke="#b80000" stroke-width="1.7" stroke-linecap="round"/><path d="M312.7 116.9L321.8 117.5" stroke="#b85a00" stroke-width="1.7" stroke-linecap="round"/><path d="M302.4 116.6L293.7 99.3" stroke="#c07400" stroke-width="1.7" stroke-linecap="round"/><path d="M293.7 99.3L300.5 85" stroke="#aca000" stroke-width="1.7" stroke-linecap="round"/><path d="M321.8 117.5L335.1 105.2" stroke="#7aac00" stroke-width="1.7" stroke-linecap="round"/><path d="M335.1 105.2L333.8 89.4" stroke="#3aa200" stroke-width="1.7" stroke-linecap="round"/><path d="M312.7 116.9L308.5 154" stroke="#00a622" stroke-width="1.7" stroke-linecap="round"/><path d="M308.5 154L313.3 187" stroke="#12b83a" stroke-width="1.7" stroke-linecap="round"/><path d="M313.3 187L310 215.6" stroke="#18b878" stroke-width="1.7" stroke-linecap="round"/><path d="M312.7 116.9L320.3 153.5" stroke="#00a4ac" stroke-width="1.7" stroke-linecap="round"/><path d="M320.3 153.5L319 187" stroke="#1c84c4" stroke-width="1.7" stroke-linecap="round"/><path d="M319 187L316.7 215.6" stroke="#1c44d4" stroke-width="1.7" stroke-linecap="round"/><path d="M312.7 116.9L314.6 108.5" stroke="#1010c0" stroke-width="1.7" stroke-linecap="round"/><circle cx="300.5" cy="85" r="0.9" fill="#d8d000"/><circle cx="293.7" cy="99.3" r="0.9" fill="#ffd000"/><circle cx="302.4" cy="116.6" r="0.9" fill="#ff8a00"/><circle cx="321.8" cy="117.5" r="0.9" fill="#a8e000"/><circle cx="335.1" cy="105.2" r="0.9" fill="#40e000"/><circle cx="333.8" cy="89.4" r="0.9" fill="#20c040"/><circle cx="308.5" cy="154" r="0.9" fill="#20e080"/><circle cx="320.3" cy="153.5" r="0.9" fill="#2060ff"/><circle cx="313.3" cy="187" r="0.9" fill="#30e0c0"/><circle cx="319" cy="187" r="0.9" fill="#2030ff"/><circle cx="310" cy="215.6" r="0.9" fill="#20b0ff"/><circle cx="316.7" cy="215.6" r="0.9" fill="#6020e0"/><circle cx="312.7" cy="116.9" r="0.9" fill="#e04000"/><ellipse cx="314.9" cy="106.2" rx="5.6" ry="6.2" fill="none" stroke="#f6f6f6" stroke-width="1.2"/><path d="M310.5 103.2q1.6 -1.8 3.4 0M315.9 103.2q1.6 -1.8 3.4 0" stroke="#fff" stroke-width="1.7" fill="none"/><path d="M315.1 104.2l1.4 2.6l-2 1.6" stroke="#fff" stroke-width="1.4" fill="none"/><ellipse cx="314.9" cy="109.2" rx="2.6" ry="1.5" fill="#fff"/><circle cx="309.5" cy="104.6" r="0.8" fill="#ff40c0"/><circle cx="320.3" cy="105" r="0.8" fill="#ff40c0"/><path d="M301.4 84.4l9.6 0.6l-2.6 1.2l1 1l-3 0.2l0.4 2.2l-2.4 -1.6l-1.4 1l-0.8 -2.4z" fill="#0808f0" stroke="#0808f0" stroke-width="0.8" stroke-linejoin="round"/><path d="M325.4 83.2l3.4 0.4l3 2.6l1.6 2.6l-3 0.4l-1.4 1.4l-2.2 -1.8l-1 -2.4z" fill="#0808f0" stroke="#0808f0" stroke-width="0.8" stroke-linejoin="round"/><circle cx="332" cy="86.8" r="0.7" fill="#d020a0"/><path d="M429.3 116.9L419 116.6" stroke="#b80000" stroke-width="1.7" stroke-linecap="round"/><path d="M429.3 116.9L438.4 117.5" stroke="#b85a00" stroke-width="1.7" stroke-linecap="round"/><path d="M419 116.6L410.3 99.3" stroke="#c07400" stroke-width="1.7" stroke-linecap="round"/><path d="M410.3 99.3L417.1 85" stroke="#aca000" stroke-width="1.7" stroke-linecap="round"/><path d="M438.4 117.5L451.7 105.2" stroke="#7aac00" stroke-width="1.7" stroke-linecap="round"/><path d="M451.7 105.2L450.4 89.4" stroke="#3aa200" stroke-width="1.7" stroke-linecap="round"/><path d="M429.3 116.9L425.1 154" stroke="#00a622" stroke-width="1.7" stroke-linecap="round"/><path d="M425.1 154L429.9 187" stroke="#12b83a" stroke-width="1.7" stroke-linecap="round"/><path d="M429.9 187L426.6 215.6" stroke="#18b878" stroke-width="1.7" stroke-linecap="round"/><path d="M429.3 116.9L436.9 153.5" stroke="#00a4ac" stroke-width="1.7" stroke-linecap="round"/><path d="M436.9 153.5L435.6 187" stroke="#1c84c4" stroke-width="1.7" stroke-linecap="round"/><path d="M435.6 187L433.3 215.6" stroke="#1c44d4" stroke-width="1.7" stroke-linecap="round"/><path d="M429.3 116.9L431.2 108.5" stroke="#1010c0" stroke-width="1.7" stroke-linecap="round"/><circle cx="417.1" cy="85" r="0.9" fill="#d8d000"/><circle cx="410.3" cy="99.3" r="0.9" fill="#ffd000"/><circle cx="419" cy="116.6" r="0.9" fill="#ff8a00"/><circle cx="438.4" cy="117.5" r="0.9" fill="#a8e000"/><circle cx="451.7" cy="105.2" r="0.9" fill="#40e000"/><circle cx="450.4" cy="89.4" r="0.9" fill="#20c040"/><circle cx="425.1" cy="154" r="0.9" fill="#20e080"/><circle cx="436.9" cy="153.5" r="0.9" fill="#2060ff"/><circle cx="429.9" cy="187" r="0.9" fill="#30e0c0"/><circle cx="435.6" cy="187" r="0.9" fill="#2030ff"/><circle cx="426.6" cy="215.6" r="0.9" fill="#20b0ff"/><circle cx="433.3" cy="215.6" r="0.9" fill="#6020e0"/><circle cx="429.3" cy="116.9" r="0.9" fill="#e04000"/><ellipse cx="431.5" cy="106.2" rx="5.6" ry="6.2" fill="none" stroke="#f6f6f6" stroke-width="1.2"/><path d="M427.1 103.2q1.6 -1.8 3.4 0M432.5 103.2q1.6 -1.8 3.4 0" stroke="#fff" stroke-width="1.7" fill="none"/><path d="M431.7 104.2l1.4 2.6l-2 1.6" stroke="#fff" stroke-width="1.4" fill="none"/><ellipse cx="431.5" cy="109.2" rx="2.6" ry="1.5" fill="#fff"/><circle cx="426.1" cy="104.6" r="0.8" fill="#ff40c0"/><circle cx="436.9" cy="105" r="0.8" fill="#ff40c0"/><path d="M418 84.4l9.6 0.6l-2.6 1.2l1 1l-3 0.2l0.4 2.2l-2.4 -1.6l-1.4 1l-0.8 -2.4z" fill="#0808f0" stroke="#0808f0" stroke-width="0.8" stroke-linejoin="round"/><path d="M442 83.2l3.4 0.4l3 2.6l1.6 2.6l-3 0.4l-1.4 1.4l-2.2 -1.8l-1 -2.4z" fill="#0808f0" stroke="#0808f0" stroke-width="0.8" stroke-linejoin="round"/><circle cx="448.6" cy="86.8" r="0.7" fill="#d020a0"/></g></svg>
<svg class="img" style="left:547.4px;top:233.4px" width="123.1" height="163.6" viewBox="547.4 233.4 123.1 163.6"><rect x="547.4" y="233.4" width="123.1" height="163.6" fill="#e6ecf0"/><g transform="translate(547.4 233.4) scale(0.9520 0.9512)"><defs><filter id="bln" x="-20%" y="-50%" width="140%" height="200%"><feGaussianBlur stdDeviation="3"/></filter><filter id="fvn" x="-30%" y="-10%" width="160%" height="120%"><feGaussianBlur stdDeviation="1.6"/></filter><filter id="fbn" x="-5%" y="-5%" width="110%" height="110%"><feGaussianBlur stdDeviation="0.3"/></filter><clipPath id="cpn"><rect x="0" y="0" width="129.3" height="172"/></clipPath></defs><g clip-path="url(#cpn)"><linearGradient id="skyn" x1="0" y1="0" x2="0" y2="1"><stop offset="0" stop-color="#a9d0f3"/><stop offset="0.045" stop-color="#cfe6fa"/><stop offset="0.1" stop-color="#f2f8fe"/><stop offset="0.5" stop-color="#fbfdff"/><stop offset="1" stop-color="#ffffff"/></linearGradient><rect x="0" y="0" width="129.3" height="172" fill="url(#skyn)"/><g filter="url(#bln)"><ellipse cx="20" cy="72" rx="28" ry="5" fill="#e6f3fd"/><ellipse cx="108" cy="30" rx="20" ry="7" fill="#eef5fe"/><ellipse cx="18" cy="30" rx="18" ry="7" fill="#eaf4fe"/><ellipse cx="30" cy="118" rx="30" ry="2" fill="#e0edfb"/></g><linearGradient id="gln" x1="0" y1="0" x2="0" y2="1"><stop offset="0" stop-color="#c2cff2"/><stop offset="0.25" stop-color="#e4e8f8"/><stop offset="0.6" stop-color="#f7f6f8"/><stop offset="1" stop-color="#f3f0ea"/></linearGradient><linearGradient id="grn" x1="0" y1="0" x2="1" y2="1"><stop offset="0" stop-color="#a0aac8"/><stop offset="0.4" stop-color="#a9a7a2"/><stop offset="1" stop-color="#aaa592"/></linearGradient><rect x="0" y="131.4" width="129.3" height="41" fill="url(#gln)"/><path d="M76 131.4L94 131.4L96 154L84 153Z" fill="#a4abc4"/><path d="M93 131.4L129.3 131.4L129.3 172L104 172L102 154L95 153Z" fill="url(#grn)"/><path d="M84 153L102 154L104 172L84 172Z" fill="#e0e0e6"/><filter id="nzn" x="0" y="0" width="100%" height="100%"><feTurbulence type="fractalNoise" baseFrequency="0.3 0.42" numOctaves="2" seed="7"/><feColorMatrix values="0 0 0 0 0.58  0 0 0 0 0.76  0 0 0 0 1  2.8 2.8 0 0 -2.75"/></filter><rect x="0" y="0" width="129.3" height="172" filter="url(#nzn)" opacity="0.5"/><filter id="npn" x="0" y="0" width="100%" height="100%"><feTurbulence type="fractalNoise" baseFrequency="0.3 0.45" numOctaves="2" seed="31"/><feColorMatrix values="0 0 0 0 0.78  0 0 0 0 0.6  0 0 0 0 0.95  0 1.6 1.6 0 -1.32"/></filter><rect x="0" y="120" width="129.3" height="52" filter="url(#npn)" opacity="0.45"/><g filter="url(#fbn)"><g opacity="0.3" filter="url(#fvn)"><path d="M47 48L43.6 74L46 104L52 104L53 70Z" fill="#ffffff"/><path d="M80 48L87.6 72L86.4 102L80 102L77.4 70Z" fill="#ffffff"/></g><ellipse cx="66.5" cy="26" rx="16.8" ry="11.6" fill="#ffffff"/><path d="M58 105L68.8 105L68 116L66.8 124L66.4 134L59.6 134L59.8 122L58.8 114Z" fill="#cca69a"/><path d="M68.8 105L78.4 105L76.8 117L75.6 124L75.4 132L68.4 132L68.8 122L68.6 114Z" fill="#cca69a"/><path d="M68.6 105L67.4 120L66.6 131L68.2 131L69.2 118Z" fill="#a07868"/><path d="M58 106L68 106L68 111L58.2 111ZM69 106L78.6 106L78 111L69 111Z" fill="#a07868" opacity="0.6"/><path d="M58.6 133.4L66.6 135L66.2 146L65.6 154.5L57.4 153.6L58 146Z" fill="#fdf4fa"/><path d="M67.2 130.6L75.8 131.8L74.8 146L73.6 157.4L65.8 156.8L66.4 146Z" fill="#fdf4fa"/><path d="M56.6 153.4C54.6 156 54.4 163 55.6 167C57 168.8 63 168.8 64.4 167C65 163 65 157 64.6 154.6Z" fill="#8c1408"/><path d="M65.6 156.8C64.4 159 64.2 164 65 167.4C67 168.8 72 168.8 73.6 167.4C74.2 164 74 159.6 73.4 157.4Z" fill="#8c1408"/><path d="M54 70.2C60 72.4 68 72.2 73.8 69.6C78 80 83.4 93 86.6 102.4C80 107 72 108.2 66 108.4C60 108.6 54 107.6 49.2 105.4C50.2 93 52 80 54 70.2Z" fill="#a01410"/><path d="M61 75L58.6 108M69 75L72.6 107.6M76 79L81.6 104.6" stroke="#780c08" stroke-width="1.6" fill="none" opacity="0.7"/><path d="M52.8 62L73.4 63L74 70C68 72.8 60 73 54 71Z" fill="#ecc4b6"/><path d="M53 62L73.4 63L73.6 66.4C67 65.4 60 65.4 53 64.8Z" fill="#a07868" opacity="0.85"/><path d="M53 11.4L43.6 25.8" stroke="#ecc4b6" stroke-width="4.6" stroke-linecap="round" fill="none"/><path d="M43.6 26L48.8 40" stroke="#ecc4b6" stroke-width="6" stroke-linecap="round" fill="none"/><path d="M46.6 29L50.8 39.6" stroke="#a07868" stroke-width="1.8" stroke-linecap="round" fill="none" opacity="0.55"/><path d="M84.4 13.8L88.4 30.4" stroke="#ecc4b6" stroke-width="4.6" stroke-linecap="round" fill="none"/><path d="M88.2 30.8L81.2 41.4" stroke="#ecc4b6" stroke-width="6" stroke-linecap="round" fill="none"/><path d="M85.6 32.6L80 40" stroke="#a07868" stroke-width="1.8" stroke-linecap="round" fill="none" opacity="0.55"/><path d="M50.4 8.6C53 7 58 7.8 63 9.6L62.8 10.6L58.6 11L58.8 14.2L55.6 14.4L51.4 12.4Z" fill="#ecc4b6" stroke="#ecc4b6" stroke-width="0.7" stroke-linejoin="round"/><path d="M78.8 9.4C81 8.4 84.6 9.8 86.2 12.2L84.8 16L81.2 15.8L79.8 12.6Z" fill="#ecc4b6" stroke="#ecc4b6" stroke-width="0.7" stroke-linejoin="round"/><path d="M76.6 2.2L78.8 9" stroke="#e8dcc0" stroke-width="1.3" stroke-linecap="round" opacity="0.85"/><path d="M44.4 43C47 40.6 52 39 57 38.8L74 38.8C77 38.8 79.4 39.4 80.6 40.4L81 49.4L77 50L76.4 64.6C68 65.8 60 65.6 52 63.4L49.4 48L47.6 46Z" fill="#ffffff"/><path d="M66.5 20C61.4 20 59 23.6 58.6 27.6C57.8 32.6 56.4 37.4 55 40.2L60.4 41.2L62.4 38L71.4 38.6L70 44C70.2 52 70.4 60 70.8 66.4L75.4 67.6C76.4 60 76.8 50 76.4 43C76.8 39 76.4 34 75.6 29.6C75 24 72 20 66.5 20Z" fill="#3c1410"/><ellipse cx="66.3" cy="31.4" rx="5.5" ry="7.8" fill="#f4d4c8"/><path d="M60.4 29C61 24.6 63.4 22 66.6 21.6C65 24 62.6 27 60.4 29ZM66.6 21.6C70 22 72.2 25 72.4 29.6C70.6 27 68.4 24 66.6 21.6Z" fill="#3c1410"/><ellipse cx="65.9" cy="35.8" rx="1.7" ry="1" fill="#a01020"/><path d="M62.6 30.4h2.2M67.6 30.6h2.2" stroke="#280808" stroke-width="1" opacity="0.85"/><path d="M60 40.2L65.6 43.4L70.4 40.2L71.4 43.6L66 46L59.4 43.4Z" fill="#ffffff"/><path d="M55.4 46.4C58 44.4 62 44.2 64.6 45.4C67 44 70.6 45.4 72.4 47.6C71 49.6 69.6 50.6 68.8 51C69.4 56 69.2 61 68.6 64.8L64 64.4C62 64.2 60 63.4 58.8 62.2C61 57 62.4 53 62.6 49.6C60 50 57 49 55.4 46.4Z" fill="#e4cc98"/><path d="M64.4 47L64.6 63.4" stroke="#b08040" stroke-width="1.4" opacity="0.7" fill="none"/></g></g></g></svg>
<svg class="img" style="left:728.4px;top:66.3px" width="258.6" height="171.8" viewBox="728.4 66.3 258.6 171.8"><rect x="728.4" y="66.3" width="258.6" height="171.8" fill="#e6ecf0"/><g transform="translate(728.4 66.3) scale(1.0000 0.9988)"><defs><filter id="bla" x="-20%" y="-50%" width="140%" height="200%"><feGaussianBlur stdDeviation="3"/></filter><filter id="fva" x="-30%" y="-10%" width="160%" height="120%"><feGaussianBlur stdDeviation="1.6"/></filter><filter id="fba" x="-5%" y="-5%" width="110%" height="110%"><feGaussianBlur stdDeviation="0.45"/></filter><clipPath id="cpa"><rect x="0" y="0" width="129.3" height="172"/></clipPath></defs><g clip-path="url(#cpa)"><linearGradient id="skya" x1="0" y1="0" x2="0" y2="1"><stop offset="0" stop-color="#d9e5f1"/><stop offset="0.35" stop-color="#d7e7ee"/><stop offset="0.55" stop-color="#e2ecf0"/><stop offset="0.76" stop-color="#f2f2f2"/><stop offset="1" stop-color="#f0f0f0"/></linearGradient><rect x="0" y="0" width="129.3" height="172" fill="url(#skya)"/><g filter="url(#bla)"><ellipse cx="20" cy="12" rx="26" ry="8" fill="#e8eef6"/><ellipse cx="108" cy="30" rx="26" ry="12" fill="#e4ecf4"/><ellipse cx="22" cy="70" rx="30" ry="7" fill="#c9e1e6"/><ellipse cx="112" cy="68" rx="22" ry="5" fill="#cfe3e8"/><ellipse cx="30" cy="52" rx="30" ry="6" fill="#e9eff3"/><ellipse cx="100" cy="52" rx="26" ry="6" fill="#eef2f5"/><ellipse cx="64" cy="96" rx="70" ry="10" fill="#f1f2f3"/><path d="M10 88L45 98" stroke="#c8d0de" stroke-width="3"/><ellipse cx="30" cy="118" rx="34" ry="3" fill="#dfe2e4"/></g><linearGradient id="gla" x1="0" y1="0" x2="0" y2="1"><stop offset="0" stop-color="#a6b4c8"/><stop offset="0.45" stop-color="#bcc2ca"/><stop offset="0.7" stop-color="#d3d2d0"/><stop offset="1" stop-color="#e3ddd1"/></linearGradient><linearGradient id="gra" x1="0" y1="0" x2="1" y2="1"><stop offset="0" stop-color="#a2a29e"/><stop offset="0.4" stop-color="#a99b80"/><stop offset="1" stop-color="#bba47c"/></linearGradient><rect x="0" y="131.4" width="129.3" height="41" fill="url(#gla)"/><path d="M76 131.4L94 131.4L96 154L84 153Z" fill="#a9b0b8"/><path d="M93 131.4L129.3 131.4L129.3 172L104 172L102 154L95 153Z" fill="url(#gra)"/><path d="M84 153L102 154L104 172L84 172Z" fill="#d9d5cd"/><g filter="url(#bla)"><ellipse cx="20" cy="148" rx="24" ry="2.4" fill="#e8e8ea"/></g><g filter="url(#fba)"><g opacity="0.5" filter="url(#fva)"><path d="M47 48L43.6 74L46 104L52 104L53 70Z" fill="#ffffff"/><path d="M80 48L87.6 72L86.4 102L80 102L77.4 70Z" fill="#ffffff"/></g><ellipse cx="66.5" cy="26" rx="16.8" ry="11.6" fill="#f1ede6"/><path d="M58 105L68.8 105L68 116L66.8 124L66.4 134L59.6 134L59.8 122L58.8 114Z" fill="#dba583"/><path d="M68.8 105L78.4 105L76.8 117L75.6 124L75.4 132L68.4 132L68.8 122L68.6 114Z" fill="#dba583"/><path d="M68.6 105L67.4 120L66.6 131L68.2 131L69.2 118Z" fill="#c68c6c"/><path d="M58 106L68 106L68 111L58.2 111ZM69 106L78.6 106L78 111L69 111Z" fill="#c68c6c" opacity="0.6"/><path d="M58.6 133.4L66.6 135L66.2 146L65.6 154.5L57.4 153.6L58 146Z" fill="#f7f5f3"/><path d="M67.2 130.6L75.8 131.8L74.8 146L73.6 157.4L65.8 156.8L66.4 146Z" fill="#f7f5f3"/><path d="M56.6 153.4C54.6 156 54.4 163 55.6 167C57 168.8 63 168.8 64.4 167C65 163 65 157 64.6 154.6Z" fill="#9c1020"/><path d="M65.6 156.8C64.4 159 64.2 164 65 167.4C67 168.8 72 168.8 73.6 167.4C74.2 164 74 159.6 73.4 157.4Z" fill="#9c1020"/><path d="M54 70.2C60 72.4 68 72.2 73.8 69.6C78 80 83.4 93 86.6 102.4C80 107 72 108.2 66 108.4C60 108.6 54 107.6 49.2 105.4C50.2 93 52 80 54 70.2Z" fill="#aa1228"/><path d="M61 75L58.6 108M69 75L72.6 107.6M76 79L81.6 104.6" stroke="#880c1e" stroke-width="1.6" fill="none" opacity="0.7"/><path d="M52.8 62L73.4 63L74 70C68 72.8 60 73 54 71Z" fill="#e8b69c"/><path d="M53 62L73.4 63L73.6 66.4C67 65.4 60 65.4 53 64.8Z" fill="#c68c6c" opacity="0.85"/><path d="M53 11.4L43.6 25.8" stroke="#e8b69c" stroke-width="4.6" stroke-linecap="round" fill="none"/><path d="M43.6 26L48.8 40" stroke="#e8b69c" stroke-width="6" stroke-linecap="round" fill="none"/><path d="M46.6 29L50.8 39.6" stroke="#c68c6c" stroke-width="1.8" stroke-linecap="round" fill="none" opacity="0.55"/><path d="M84.4 13.8L88.4 30.4" stroke="#e8b69c" stroke-width="4.6" stroke-linecap="round" fill="none"/><path d="M88.2 30.8L81.2 41.4" stroke="#e8b69c" stroke-width="6" stroke-linecap="round" fill="none"/><path d="M85.6 32.6L80 40" stroke="#c68c6c" stroke-width="1.8" stroke-linecap="round" fill="none" opacity="0.55"/><path d="M50.4 8.6C53 7 58 7.8 63 9.6L62.8 10.6L58.6 11L58.8 14.2L55.6 14.4L51.4 12.4Z" fill="#e8b69c" stroke="#e8b69c" stroke-width="0.7" stroke-linejoin="round"/><path d="M78.8 9.4C81 8.4 84.6 9.8 86.2 12.2L84.8 16L81.2 15.8L79.8 12.6Z" fill="#e8b69c" stroke="#e8b69c" stroke-width="0.7" stroke-linejoin="round"/><path d="M76.6 2.2L78.8 9" stroke="#e8dcc0" stroke-width="1.3" stroke-linecap="round" opacity="0.85"/><path d="M44.4 43C47 40.6 52 39 57 38.8L74 38.8C77 38.8 79.4 39.4 80.6 40.4L81 49.4L77 50L76.4 64.6C68 65.8 60 65.6 52 63.4L49.4 48L47.6 46Z" fill="#f6f3ee"/><path d="M66.5 20C61.4 20 59 23.6 58.6 27.6C57.8 32.6 56.4 37.4 55 40.2L60.4 41.2L62.4 38L71.4 38.6L70 44C70.2 52 70.4 60 70.8 66.4L75.4 67.6C76.4 60 76.8 50 76.4 43C76.8 39 76.4 34 75.6 29.6C75 24 72 20 66.5 20Z" fill="#6a3a2a"/><ellipse cx="66.3" cy="31.4" rx="5.5" ry="7.8" fill="#f0c6ae"/><path d="M60.4 29C61 24.6 63.4 22 66.6 21.6C65 24 62.6 27 60.4 29ZM66.6 21.6C70 22 72.2 25 72.4 29.6C70.6 27 68.4 24 66.6 21.6Z" fill="#6a3a2a"/><ellipse cx="65.9" cy="35.8" rx="1.7" ry="1" fill="#b02030"/><path d="M62.6 30.4h2.2M67.6 30.6h2.2" stroke="#3c1e18" stroke-width="1" opacity="0.85"/><path d="M60 40.2L65.6 43.4L70.4 40.2L71.4 43.6L66 46L59.4 43.4Z" fill="#f6f3ee"/><path d="M55.4 46.4C58 44.4 62 44.2 64.6 45.4C67 44 70.6 45.4 72.4 47.6C71 49.6 69.6 50.6 68.8 51C69.4 56 69.2 61 68.6 64.8L64 64.4C62 64.2 60 63.4 58.8 62.2C61 57 62.4 53 62.6 49.6C60 50 57 49 55.4 46.4Z" fill="#cfa55e"/><path d="M64.4 47L64.6 63.4" stroke="#b98a44" stroke-width="1.4" opacity="0.7" fill="none"/></g></g></g><g transform="translate(857.7 66.3) scale(1.0000 0.9988)"><defs><filter id="blb" x="-20%" y="-50%" width="140%" height="200%"><feGaussianBlur stdDeviation="3"/></filter><filter id="fvb" x="-30%" y="-10%" width="160%" height="120%"><feGaussianBlur stdDeviation="1.6"/></filter><filter id="fbb" x="-5%" y="-5%" width="110%" height="110%"><feGaussianBlur stdDeviation="0.45"/></filter><clipPath id="cpb"><rect x="0" y="0" width="129.3" height="172"/></clipPath></defs><g clip-path="url(#cpb)"><linearGradient id="skyb" x1="0" y1="0" x2="0" y2="1"><stop offset="0" stop-color="#e4edf6"/><stop offset="0.3" stop-color="#dbe9f3"/><stop offset="0.55" stop-color="#d3e6f1"/><stop offset="0.76" stop-color="#dfeaf0"/><stop offset="1" stop-color="#f0f0f0"/></linearGradient><rect x="0" y="0" width="129.3" height="172" fill="url(#skyb)"/><g filter="url(#blb)"><ellipse cx="66" cy="22" rx="40" ry="16" fill="#edf2f8"/><ellipse cx="30" cy="44" rx="34" ry="4" fill="#e9f0f6"/><ellipse cx="104" cy="46" rx="24" ry="3" fill="#e6eef4"/><ellipse cx="26" cy="68" rx="30" ry="5" fill="#e7eef4"/><ellipse cx="40" cy="120" rx="48" ry="13" fill="#f6f3ee"/><ellipse cx="100" cy="126" rx="40" ry="6" fill="#f1efea"/><ellipse cx="110" cy="100" rx="26" ry="8" fill="#cfe4ee"/></g><linearGradient id="glb" x1="0" y1="0" x2="0" y2="1"><stop offset="0" stop-color="#b4c2d8"/><stop offset="0.5" stop-color="#d6d8de"/><stop offset="1" stop-color="#e4dfda"/></linearGradient><linearGradient id="grb" x1="0" y1="0" x2="0" y2="1"><stop offset="0" stop-color="#64c2ba"/><stop offset="0.35" stop-color="#8ed1cb"/><stop offset="0.62" stop-color="#cfe3df"/><stop offset="1" stop-color="#e6e8e4"/></linearGradient><rect x="0" y="131.4" width="129.3" height="41" fill="url(#glb)"/><path d="M90 131.4L129.3 131.4L129.3 172L104 172Z" fill="url(#grb)"/><path d="M72 131.4L92 131.4L104.4 172L74 172Z" fill="#cdbc9c"/><path d="M72 131.4L82 131.4L84 172L74 172Z" fill="#b0a48e"/><path d="M62 167.4L104 167.4L104.6 172L62 172Z" fill="#b89a6c" opacity="0.4"/><g filter="url(#blb)"><ellipse cx="98" cy="153" rx="8" ry="1.4" fill="#f0f0f0"/><ellipse cx="24" cy="152" rx="26" ry="4" fill="#e8e8ec"/></g><g filter="url(#fbb)"><g opacity="0.5" filter="url(#fvb)"><path d="M47 48L43.6 74L46 104L52 104L53 70Z" fill="#ffffff"/><path d="M80 48L87.6 72L86.4 102L80 102L77.4 70Z" fill="#ffffff"/></g><ellipse cx="66.5" cy="26" rx="16.8" ry="11.6" fill="#eef2f8"/><path d="M58 105L68.8 105L68 116L66.8 124L66.4 134L59.6 134L59.8 122L58.8 114Z" fill="#dd9c74"/><path d="M68.8 105L78.4 105L76.8 117L75.6 124L75.4 132L68.4 132L68.8 122L68.6 114Z" fill="#dd9c74"/><path d="M68.6 105L67.4 120L66.6 131L68.2 131L69.2 118Z" fill="#c88460"/><path d="M58 106L68 106L68 111L58.2 111ZM69 106L78.6 106L78 111L69 111Z" fill="#c88460" opacity="0.6"/><path d="M58.6 133.4L66.6 135L66.2 146L65.6 154.5L57.4 153.6L58 146Z" fill="#f6e4dc"/><path d="M67.2 130.6L75.8 131.8L74.8 146L73.6 157.4L65.8 156.8L66.4 146Z" fill="#f6e4dc"/><path d="M56.6 153.4C54.6 156 54.4 163 55.6 167C57 168.8 63 168.8 64.4 167C65 163 65 157 64.6 154.6Z" fill="#b01018"/><path d="M65.6 156.8C64.4 159 64.2 164 65 167.4C67 168.8 72 168.8 73.6 167.4C74.2 164 74 159.6 73.4 157.4Z" fill="#b01018"/><path d="M54 70.2C60 72.4 68 72.2 73.8 69.6C78 80 83.4 93 86.6 102.4C80 107 72 108.2 66 108.4C60 108.6 54 107.6 49.2 105.4C50.2 93 52 80 54 70.2Z" fill="#c4161c"/><path d="M61 75L58.6 108M69 75L72.6 107.6M76 79L81.6 104.6" stroke="#9c0c14" stroke-width="1.6" fill="none" opacity="0.7"/><path d="M52.8 62L73.4 63L74 70C68 72.8 60 73 54 71Z" fill="#ecb294"/><path d="M53 62L73.4 63L73.6 66.4C67 65.4 60 65.4 53 64.8Z" fill="#c88460" opacity="0.85"/><path d="M53 11.4L43.6 25.8" stroke="#ecb294" stroke-width="4.6" stroke-linecap="round" fill="none"/><path d="M43.6 26L48.8 40" stroke="#ecb294" stroke-width="6" stroke-linecap="round" fill="none"/><path d="M46.6 29L50.8 39.6" stroke="#c88460" stroke-width="1.8" stroke-linecap="round" fill="none" opacity="0.55"/><path d="M84.4 13.8L88.4 30.4" stroke="#ecb294" stroke-width="4.6" stroke-linecap="round" fill="none"/><path d="M88.2 30.8L81.2 41.4" stroke="#ecb294" stroke-width="6" stroke-linecap="round" fill="none"/><path d="M85.6 32.6L80 40" stroke="#c88460" stroke-width="1.8" stroke-linecap="round" fill="none" opacity="0.55"/><path d="M50.4 8.6C53 7 58 7.8 63 9.6L62.8 10.6L58.6 11L58.8 14.2L55.6 14.4L51.4 12.4Z" fill="#ecb294" stroke="#ecb294" stroke-width="0.7" stroke-linejoin="round"/><path d="M78.8 9.4C81 8.4 84.6 9.8 86.2 12.2L84.8 16L81.2 15.8L79.8 12.6Z" fill="#ecb294" stroke="#ecb294" stroke-width="0.7" stroke-linejoin="round"/><path d="M76.6 2.2L78.8 9" stroke="#f6c4ac" stroke-width="1.3" stroke-linecap="round" opacity="0.85"/><path d="M44.4 43C47 40.6 52 39 57 38.8L74 38.8C77 38.8 79.4 39.4 80.6 40.4L81 49.4L77 50L76.4 64.6C68 65.8 60 65.6 52 63.4L49.4 48L47.6 46Z" fill="#f8ebe2"/><path d="M66.5 20C61.4 20 59 23.6 58.6 27.6C57.8 32.6 56.4 37.4 55 40.2L60.4 41.2L62.4 38L71.4 38.6L70 44C70.2 52 70.4 60 70.8 66.4L75.4 67.6C76.4 60 76.8 50 76.4 43C76.8 39 76.4 34 75.6 29.6C75 24 72 20 66.5 20Z" fill="#6a3626"/><ellipse cx="66.3" cy="31.4" rx="5.5" ry="7.8" fill="#f2c0a4"/><path d="M60.4 29C61 24.6 63.4 22 66.6 21.6C65 24 62.6 27 60.4 29ZM66.6 21.6C70 22 72.2 25 72.4 29.6C70.6 27 68.4 24 66.6 21.6Z" fill="#6a3626"/><ellipse cx="65.9" cy="35.8" rx="1.7" ry="1" fill="#b02030"/><path d="M62.6 30.4h2.2M67.6 30.6h2.2" stroke="#3c1e18" stroke-width="1" opacity="0.85"/><path d="M60 40.2L65.6 43.4L70.4 40.2L71.4 43.6L66 46L59.4 43.4Z" fill="#f8ebe2"/><path d="M55.4 46.4C58 44.4 62 44.2 64.6 45.4C67 44 70.6 45.4 72.4 47.6C71 49.6 69.6 50.6 68.8 51C69.4 56 69.2 61 68.6 64.8L64 64.4C62 64.2 60 63.4 58.8 62.2C61 57 62.4 53 62.6 49.6C60 50 57 49 55.4 46.4Z" fill="#d8601c"/><path d="M64.4 47L64.6 63.4" stroke="#b84a10" stroke-width="1.4" opacity="0.7" fill="none"/></g></g></g></svg>
</div>
</body></html>
